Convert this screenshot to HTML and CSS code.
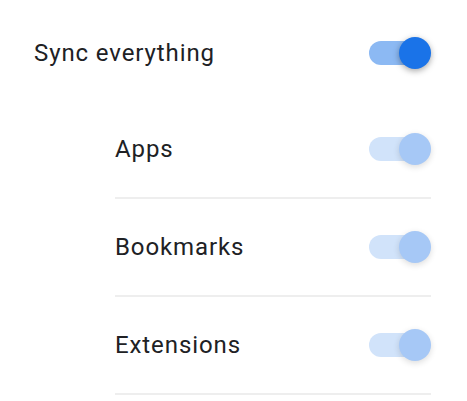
FILE: index.html
```html
<!DOCTYPE html>
<html lang="en">
<head>
  <meta charset="UTF-8" />
  <meta name="viewport" content="width=device-width, initial-scale=1.0"/>
  <title>Sync settings</title>
  <link rel="stylesheet" href="styles.css">
</head>
<body>

  <div class="sync">
    <div class="row main">
      <span class="label">Sync everything</span>
      <div class="toggle on"><span class="knob"></span></div>
    </div>

    <div class="types">
      <div class="row sub">
        <span class="label">Apps</span>
        <div class="toggle on disabled"><span class="knob"></span></div>
      </div>
      <div class="row sub">
        <span class="label">Bookmarks</span>
        <div class="toggle on disabled"><span class="knob"></span></div>
      </div>
      <div class="row sub">
        <span class="label">Extensions</span>
        <div class="toggle on disabled"><span class="knob"></span></div>
      </div>
    </div>
  </div>

</body>
</html>
```

FILE: styles.css
```css
body { margin: 0; background: #fff; font-family: Roboto, "Liberation Sans", sans-serif; color: #202124; }
.sync { padding: 4px 36px 0 34px; }
.row { display: flex; align-items: center; justify-content: space-between; height: 96px; }
.main { height: 97px; }
.label { font-size: 24px; letter-spacing: 0.9px; }
.types { margin-left: 81px; }
.sub { border-bottom: 2px solid #eeeeee; }

.toggle {
  position: relative;
  width: 56px;
  height: 24px;
  margin-right: 6px;
  border-radius: 12px;
  background: #8cb9f3;
}
.knob {
  position: absolute;
  top: -4px;
  right: -6px;
  width: 32px;
  height: 32px;
  border-radius: 50%;
  background: #1a73e8;
  box-shadow: 0 2px 6px rgba(0, 0, 0, 0.35);
}
.toggle.disabled { background: #d1e3fa; }
.toggle.disabled .knob { background: #a6c8f6; box-shadow: 0 2px 6px rgba(0, 0, 0, 0.14); }
```
